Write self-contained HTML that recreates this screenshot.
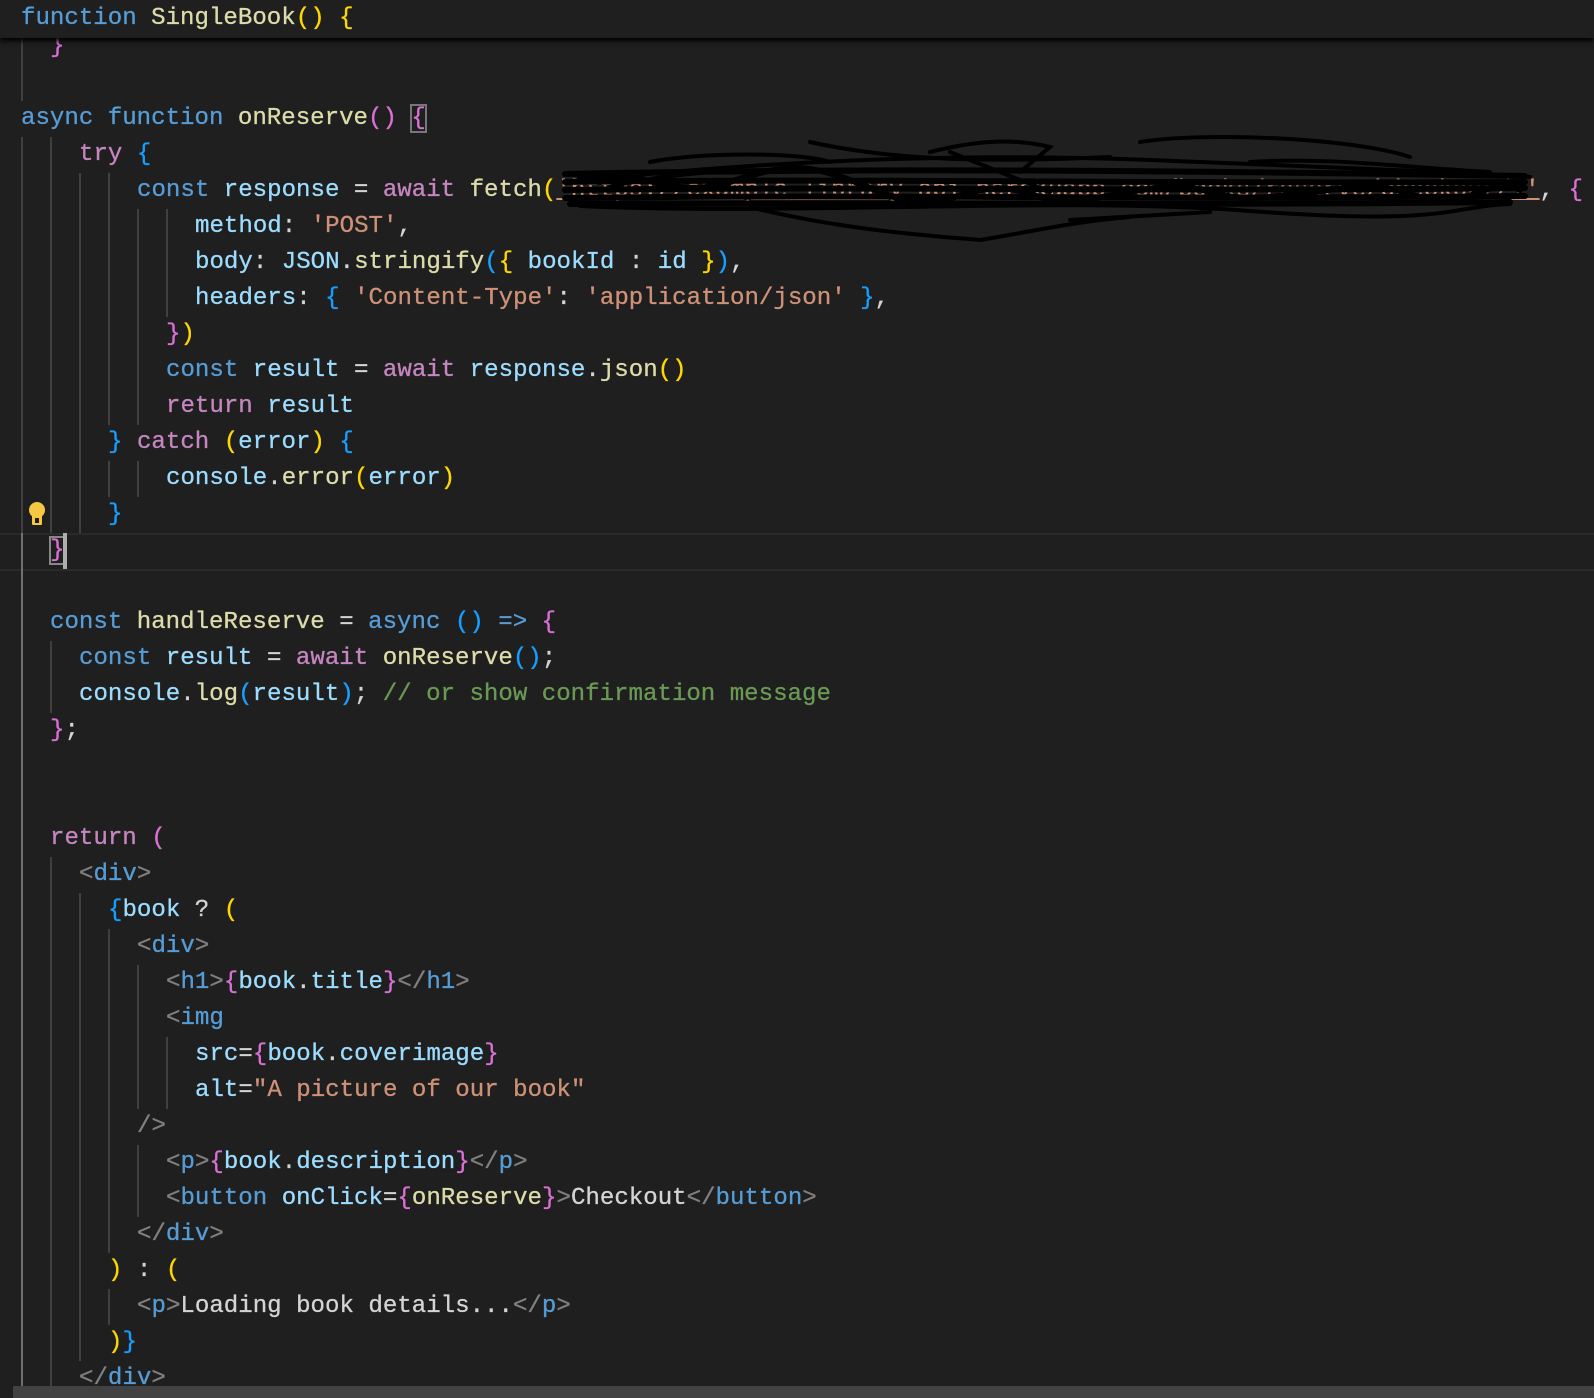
<!DOCTYPE html>
<html><head><meta charset="utf-8"><style>
html,body{margin:0;padding:0;background:#1f1f1f;width:1594px;height:1398px;overflow:hidden}
body{position:relative;font-family:"Liberation Mono","DejaVu Sans Mono",monospace;font-size:24.1px;color:#d4d4d4}
.l{position:absolute;left:21px;height:36px;line-height:36px;white-space:pre;-webkit-text-stroke:0.3px currentColor}
.k{color:#569cd6}.c{color:#c586c0}.f{color:#dcdcaa}.v{color:#9cdcfe}.s{color:#ce9178}.cm{color:#6a9955}
.y{color:#ffd700}.p{color:#da70d6}.b{color:#179fff}.g{color:#808080}.t{color:#569cd6}.w{color:#d4d4d4}
.guide{position:absolute;width:2px;background:#404040}
#hdr{position:absolute;left:0;top:0;width:1594px;height:38px;background:#1f1f1f;box-shadow:0 3px 5px #000;z-index:5}
#hl{position:absolute;left:0;top:533px;width:1594px;height:34px;border-top:2px solid #2a2a2a;border-bottom:2px solid #2a2a2a;background:#1f1f1f}
#bar{position:absolute;left:13px;top:1386px;width:1581px;height:12px;background:#424242}
</style></head><body>
<div id="hl"></div>
<div id="guides"></div>
<div class="l" style="top:29px;left:50px"><span class="p">}</span></div>
<div class="l" style="top:101px"><span class="k">async function</span> <span class="f">onReserve</span><span class="p">()</span> <span class="p" style="outline:2px solid #777;outline-offset:-1px">{</span></div>
<div class="l" style="top:137px;left:79px"><span class="c">try</span> <span class="b">{</span></div>
<div class="l" style="top:173px;left:137px"><span class="k">const</span> <span class="v">response</span> = <span class="c">await</span> <span class="f">fetch</span><span class="y">(</span><span class="s" style="text-decoration:underline">'https://example-library-api.herokuapp.com/books/reserve/checkout/1'</span>, <span class="p">{</span></div>
<div class="l" style="top:209px;left:195px"><span class="v">method</span>: <span class="s">'POST'</span>,</div>
<div class="l" style="top:245px;left:195px"><span class="v">body</span>: <span class="v">JSON</span>.<span class="f">stringify</span><span class="b">(</span><span class="y">{</span> <span class="v">bookId</span> : <span class="v">id</span> <span class="y">}</span><span class="b">)</span>,</div>
<div class="l" style="top:281px;left:195px"><span class="v">headers</span>: <span class="b">{</span> <span class="s">'Content-Type'</span>: <span class="s">'application/json'</span> <span class="b">}</span>,</div>
<div class="l" style="top:317px;left:166px"><span class="p">}</span><span class="y">)</span></div>
<div class="l" style="top:353px;left:166px"><span class="k">const</span> <span class="v">result</span> = <span class="c">await</span> <span class="v">response</span>.<span class="f">json</span><span class="y">()</span></div>
<div class="l" style="top:389px;left:166px"><span class="c">return</span> <span class="v">result</span></div>
<div class="l" style="top:425px;left:108px"><span class="b">}</span> <span class="c">catch</span> <span class="y">(</span><span class="v">error</span><span class="y">)</span> <span class="b">{</span></div>
<div class="l" style="top:461px;left:166px"><span class="v">console</span>.<span class="f">error</span><span class="y">(</span><span class="v">error</span><span class="y">)</span></div>
<div class="l" style="top:497px;left:108px"><span class="b">}</span></div>
<svg style="position:absolute;left:26px;top:501px" width="22" height="28" viewBox="0 0 22 28"><circle cx="11" cy="9" r="8" fill="#f5c743"/><rect x="6" y="12" width="10" height="12" rx="1" fill="#f5c743"/><rect x="9" y="17" width="4" height="5" fill="#1f1f1f"/></svg>
<div class="l" style="top:533px;left:50px"><span class="p" style="outline:2px solid #888;outline-offset:-1px">}</span></div>
<div style="position:absolute;left:63px;top:533px;width:4px;height:36px;background:#aeafad"></div>
<div class="l" style="top:605px;left:50px"><span class="k">const</span> <span class="f">handleReserve</span> = <span class="k">async</span> <span class="b">()</span> <span class="k">=&gt;</span> <span class="p">{</span></div>
<div class="l" style="top:641px;left:79px"><span class="k">const</span> <span class="v">result</span> = <span class="c">await</span> <span class="f">onReserve</span><span class="b">()</span>;</div>
<div class="l" style="top:677px;left:79px"><span class="v">console</span>.<span class="f">log</span><span class="b">(</span><span class="v">result</span><span class="b">)</span>; <span class="cm">// or show confirmation message</span></div>
<div class="l" style="top:713px;left:50px"><span class="p">}</span>;</div>
<div class="l" style="top:821px;left:50px"><span class="c">return</span> <span class="p">(</span></div>
<div class="l" style="top:857px;left:79px"><span class="g">&lt;</span><span class="t">div</span><span class="g">&gt;</span></div>
<div class="l" style="top:893px;left:108px"><span class="b">{</span><span class="v">book</span> ? <span class="y">(</span></div>
<div class="l" style="top:929px;left:137px"><span class="g">&lt;</span><span class="t">div</span><span class="g">&gt;</span></div>
<div class="l" style="top:965px;left:166px"><span class="g">&lt;</span><span class="t">h1</span><span class="g">&gt;</span><span class="p">{</span><span class="v">book</span>.<span class="v">title</span><span class="p">}</span><span class="g">&lt;/</span><span class="t">h1</span><span class="g">&gt;</span></div>
<div class="l" style="top:1001px;left:166px"><span class="g">&lt;</span><span class="t">img</span></div>
<div class="l" style="top:1037px;left:195px"><span class="v">src</span>=<span class="p">{</span><span class="v">book</span>.<span class="v">coverimage</span><span class="p">}</span></div>
<div class="l" style="top:1073px;left:195px"><span class="v">alt</span>=<span class="s">"A picture of our book"</span></div>
<div class="l" style="top:1109px;left:137px"><span class="g">/&gt;</span></div>
<div class="l" style="top:1145px;left:166px"><span class="g">&lt;</span><span class="t">p</span><span class="g">&gt;</span><span class="p">{</span><span class="v">book</span>.<span class="v">description</span><span class="p">}</span><span class="g">&lt;/</span><span class="t">p</span><span class="g">&gt;</span></div>
<div class="l" style="top:1181px;left:166px"><span class="g">&lt;</span><span class="t">button</span> <span class="v">onClick</span>=<span class="p">{</span><span class="f">onReserve</span><span class="p">}</span><span class="g">&gt;</span>Checkout<span class="g">&lt;/</span><span class="t">button</span><span class="g">&gt;</span></div>
<div class="l" style="top:1217px;left:137px"><span class="g">&lt;/</span><span class="t">div</span><span class="g">&gt;</span></div>
<div class="l" style="top:1253px;left:108px"><span class="y">)</span> : <span class="y">(</span></div>
<div class="l" style="top:1289px;left:137px"><span class="g">&lt;</span><span class="t">p</span><span class="g">&gt;</span>Loading book details...<span class="g">&lt;/</span><span class="t">p</span><span class="g">&gt;</span></div>
<div class="l" style="top:1325px;left:108px"><span class="y">)</span><span class="b">}</span></div>
<div class="l" style="top:1361px;left:79px"><span class="g">&lt;/</span><span class="t">div</span><span class="g">&gt;</span></div>
<svg style="position:absolute;left:550px;top:132px" width="1000" height="120" viewBox="0 0 1000 120" fill="none" stroke="#000" stroke-width="4" stroke-linecap="round">
<g stroke-width="6">
<path d="M15 42 C300 36 600 38 975 44"/>
<path d="M15 50 C300 46 600 52 975 50"/>
<path d="M15 58 C300 54 600 60 975 56"/>
<path d="M15 66 C300 62 600 68 975 64"/>
<path d="M20 72 C300 70 600 74 960 70"/>
<path d="M30 46 C80 30 120 70 180 50 S260 30 330 60 S420 40 480 62 S600 40 660 60 S800 40 860 62 S940 40 970 58"/>
</g>
<path d="M20 50 C200 30 400 20 600 28 S900 40 980 45"/>
<path d="M30 74 C250 84 500 64 700 79 S900 74 960 72"/>
<path d="M380 20 C420 10 460 5 500 15 L470 40"/>
<path d="M260 10 C350 30 450 30 560 25"/>
<path d="M590 10 C650 0 800 5 860 25"/>
<path d="M400 20 L500 60"/>
<path d="M200 75 C300 100 400 105 430 108 C480 100 520 90 580 85"/>
<path d="M60 55 C120 40 200 35 300 40"/>
<path d="M700 30 C780 25 850 35 940 40"/>
<path d="M100 30 C150 20 250 20 280 30"/>
<path d="M520 88 L660 80"/>
</svg>
<div id="hdr"><div class="l" style="top:1px"><span class="k">function</span> <span class="f">SingleBook</span><span class="y">()</span> <span class="y">{</span></div></div>
<div id="bar"></div>
<script>
var ind={'-2':2,'-1':2,0:0,1:4,2:8,3:12,4:12,5:12,6:10,7:10,8:10,9:6,10:10,11:6,12:2,13:2,14:2,15:4,16:4,17:2,18:2,19:2,20:2,21:4,22:6,23:8,24:10,25:10,26:12,27:12,28:8,29:10,30:10,31:8,32:6,33:8,34:6,35:4};
var g=document.getElementById('guides'),h='';
for(var i=-2;i<=35;i++){var n=ind[i];for(var c=0;c<n;c+=2){var x=Math.round(21+c*14.46);var col=(c==0&&i>=12)?'#707070':'#404040';h+='<div class="guide" style="left:'+x+'px;top:'+(101+36*i)+'px;height:36px;background:'+col+'"></div>';}}
g.innerHTML=h;
</script>
</body></html>
